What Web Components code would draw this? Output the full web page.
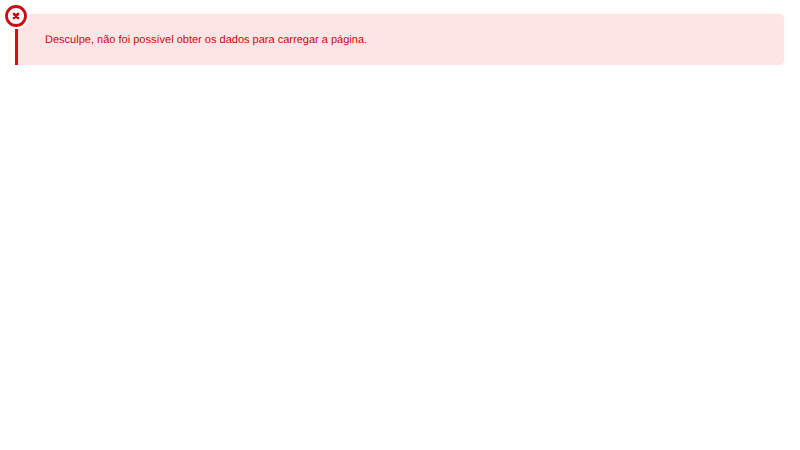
<!DOCTYPE html>
<html lang="pt">
<head>
<meta charset="utf-8">
<title>Erro</title>
<style>
    html, body { margin: 0; background: #fff; }
    body { padding: 14px 16px 0 15px; font-family: "Liberation Sans", Arial, sans-serif; }
</style>
</head>
<body>
<error-alert>Desculpe, não foi possível obter os dados para carregar a página.</error-alert>
<script>
class ErrorIcon extends HTMLElement {
    constructor() {
        super();
        this.shadowObj = this.attachShadow({ mode: 'open' });
        this.shadowObj.innerHTML = `
        <style>
            :host { display: block; width: 26px; height: 26px; }
            svg { display: block; }
        </style>
        <svg width="26" height="26" viewBox="0 0 26 26">
            <circle cx="13" cy="13" r="13" fill="#fff"/>
            <circle cx="13" cy="13" r="9.5" fill="#fff" stroke="#d0080f" stroke-width="2.8"/>
            <path d="M11 11 L15 15 M15 11 L11 15" stroke="#d0080f" stroke-width="2.8" stroke-linecap="round"/>
        </svg>`;
    }
}

class ErrorAlert extends HTMLElement {
    constructor() {
        super();
        this.shadowObj = this.attachShadow({ mode: 'open' });
        this.shadowObj.innerHTML = `
        <style>
            :host {
                display: block;
                position: relative;
                height: 51px;
                background: #ffe4e5;
                border-radius: 0 5px 5px 0;
                box-shadow: 0 0 2px rgba(255, 228, 229, 0.8);
            }
            .box {
                box-sizing: border-box;
                height: 100%;
                display: flex;
                align-items: center;
                padding: 0 0 0 30px;
                font-size: 11.02px;
                text-rendering: geometricPrecision;
                color: #c80a10;
            }
            .bar {
                position: absolute;
                left: 0;
                bottom: 0;
                width: 3px;
                height: 36px;
                background: #e00a12;
            }
            error-icon {
                position: absolute;
                left: -12px;
                top: -11px;
            }
        </style>
        <span class="bar"></span>
        <error-icon></error-icon>
        <div class="box"><slot></slot></div>`;
    }
}

customElements.define("error-icon", ErrorIcon);
customElements.define("error-alert", ErrorAlert);
</script>
</body>
</html>
